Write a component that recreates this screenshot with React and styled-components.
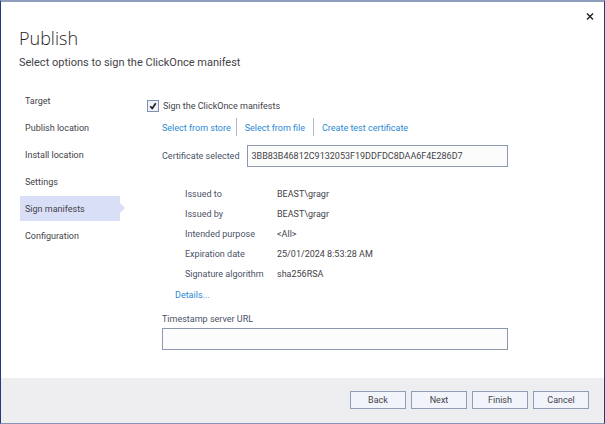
import React, { useState } from "react";
import styled, { createGlobalStyle } from "styled-components";

const GlobalStyle = createGlobalStyle`
  * {
    box-sizing: border-box;
  }

  body {
    margin: 0;
    background: #ffffff;
    color: #434347;
    font-family: Roboto, "Noto Sans", sans-serif;
    font-size: 9px;
    line-height: 12px;
  }

  button,
  input {
    font: inherit;
    color: inherit;
  }
`;

const Dialog = styled.div`
  display: flex;
  flex-direction: column;
  min-height: 100vh;
  border: 1px solid #1f3c7c;
  border-top: 2px solid #8f9dbc;
  border-bottom-color: #8695b8;
`;

const TitleBar = styled.div`
  display: flex;
  justify-content: flex-end;
  padding: 8px 8px 0;
`;

const CloseButton = styled.button`
  display: flex;
  align-items: center;
  justify-content: center;
  width: 12px;
  height: 12px;
  padding: 0;
  border: none;
  background: transparent;
  color: #1e1e1e;
  cursor: pointer;
`;

const Header = styled.header`
  padding: 4px 18px 0;
`;

const Title = styled.h1`
  margin: 0;
  font-family: "Open Sans", "Noto Sans", sans-serif;
  font-size: 18px;
  font-weight: 300;
  line-height: 24px;
  color: #1e1e1e;
`;

const Subtitle = styled.p`
  margin: 5px 0 0;
  font-size: 11px;
  line-height: 16px;
`;

const Body = styled.div`
  display: flex;
  flex: 1;
  gap: 27px;
  padding: 17px 96px 28px 19px;
`;

const Steps = styled.nav`
  display: flex;
  flex-direction: column;
  flex: 0 0 100px;
  gap: 2px;
`;

const Step = styled.a`
  position: relative;
  padding: 7px 5px 6px;
  color: inherit;
  text-decoration: none;
  background: ${({ $active }) => ($active ? "#dadff8" : "transparent")};

  /* Arrow pointing at the page of the current step */
  &::after {
    content: "";
    display: ${({ $active }) => ($active ? "block" : "none")};
    position: absolute;
    top: 7px;
    left: 100%;
    border: 5px solid transparent;
    border-left-color: #dadff8;
    border-right-width: 0;
  }
`;

const Form = styled.form`
  display: flex;
  flex-direction: column;
  flex: 1;
  min-width: 0;
  padding-top: 12px;
`;

const CheckLabel = styled.label`
  display: flex;
  align-items: center;
  gap: 4px;
`;

const CheckBox = styled.input`
  appearance: none;
  width: 12px;
  height: 12px;
  margin: 0;
  border: 1px solid #7f8fae;
  background: #eef1fb;
`;

const CheckWrap = styled.span`
  display: grid;

  > * {
    grid-area: 1 / 1;
  }

  svg {
    pointer-events: none;
  }
`;

const Options = styled.div`
  display: flex;
  flex-direction: column;
  padding: 6px 0 0 15px;
`;

const LinkBar = styled.div`
  display: flex;
`;

const Link = styled.a`
  color: #2a8ad4;
  text-decoration: none;
`;

const BarLink = styled(Link)`
  padding: 4px 8px 2px;
  border-left: 1px solid #b4b9c8;

  &:first-child {
    padding-left: 0;
    padding-right: 5px;
    border-left: none;
  }
`;

const Field = styled.div`
  display: flex;
  align-items: center;
  gap: 8px;
  margin-top: 9px;
`;

const FieldLabel = styled.label`
  color: #4a5266;
`;

const TextInput = styled.input`
  flex: 1;
  width: 100%;
  min-width: 0;
  min-height: 22px;
  padding: 0 3px;
  border: 1px solid #8c98ae;
  border-radius: 0;
  background: #fcfcfc;
`;

const Certificate = styled.dl`
  display: grid;
  grid-template-columns: 92px 1fr;
  row-gap: 8px;
  margin: 21px 0 0;
  padding-left: 23px;
`;

const Term = styled.dt`
  color: #4a5266;
`;

const Value = styled.dd`
  margin: 0;
`;

const DetailsLink = styled(Link)`
  align-self: flex-start;
  margin: 9px 0 12px 13px;
`;

const UrlField = styled.div`
  display: flex;
  flex-direction: column;
  gap: 3px;
`;

const Footer = styled.footer`
  display: flex;
  justify-content: flex-end;
  gap: 5px;
  padding: 13px 15px 14px;
  background: #eeeef0;
`;

const Button = styled.button`
  width: 56px;
  height: 18px;
  padding: 0;
  border: 1px solid #8f9db6;
  background: #f2f4fc;
  cursor: pointer;
`;

const steps = [
  "Target",
  "Publish location",
  "Install location",
  "Settings",
  "Sign manifests",
  "Configuration",
];

const certificate = [
  { name: "Issued to", value: "BEAST\\gragr" },
  { name: "Issued by", value: "BEAST\\gragr" },
  { name: "Intended purpose", value: "<All>" },
  { name: "Expiration date", value: "25/01/2024 8:53:28 AM" },
  { name: "Signature algorithm", value: "sha256RSA" },
];

const App = () => {
  const [step, setStep] = useState("Sign manifests");
  const [signed, setSigned] = useState(true);
  const [url, setUrl] = useState("");

  const move = (offset) => {
    const next = steps[steps.indexOf(step) + offset];
    if (next) {
      setStep(next);
    }
  };

  return (
    <>
      <GlobalStyle />
      <Dialog>
        <TitleBar>
          <CloseButton type="button" aria-label="Close">
            <svg width="8" height="7" viewBox="0 0 8 7" fill="none">
              <path
                d="M1 .5L7 6.5M7 .5L1 6.5"
                stroke="currentColor"
                strokeWidth="1.4"
              />
            </svg>
          </CloseButton>
        </TitleBar>
        <Header>
          <Title>Publish</Title>
          <Subtitle>Select options to sign the ClickOnce manifest</Subtitle>
        </Header>
        <Body>
          <Steps>
            {steps.map((name) => (
              <Step
                key={name}
                href="#"
                $active={name === step}
                aria-current={name === step ? "step" : undefined}
                onClick={() => setStep(name)}
              >
                {name}
              </Step>
            ))}
          </Steps>
          <Form>
            <CheckLabel>
              <CheckWrap>
                <CheckBox
                  type="checkbox"
                  checked={signed}
                  onChange={(e) => setSigned(e.target.checked)}
                />
                {signed && (
                  <svg width="12" height="12" viewBox="0 0 12 12" fill="none">
                    <path
                      d="M3.2 6.2L5.2 8.4L8.8 3.2"
                      stroke="#1e1e1e"
                      strokeWidth="1.7"
                    />
                  </svg>
                )}
              </CheckWrap>
              Sign the ClickOnce manifests
            </CheckLabel>
            <Options>
              <LinkBar>
                <BarLink href="#">Select from store</BarLink>
                <BarLink href="#">Select from file</BarLink>
                <BarLink href="#">Create test certificate</BarLink>
              </LinkBar>
              <Field>
                <FieldLabel htmlFor="certificate">
                  Certificate selected
                </FieldLabel>
                <TextInput
                  id="certificate"
                  readOnly
                  value="3BB83B46812C9132053F19DDFDC8DAA6F4E286D7"
                />
              </Field>
              <Certificate>
                {certificate.map((row) => (
                  <React.Fragment key={row.name}>
                    <Term>{row.name}</Term>
                    <Value>{row.value}</Value>
                  </React.Fragment>
                ))}
              </Certificate>
              <DetailsLink href="#">Details...</DetailsLink>
              <UrlField>
                <FieldLabel htmlFor="timestamp">Timestamp server URL</FieldLabel>
                <TextInput
                  id="timestamp"
                  value={url}
                  onChange={(e) => setUrl(e.target.value)}
                />
              </UrlField>
            </Options>
          </Form>
        </Body>
        <Footer>
          <Button type="button" onClick={() => move(-1)}>
            Back
          </Button>
          <Button type="button" onClick={() => move(1)}>
            Next
          </Button>
          <Button type="button">Finish</Button>
          <Button type="button">Cancel</Button>
        </Footer>
      </Dialog>
    </>
  );
};

export default App;
